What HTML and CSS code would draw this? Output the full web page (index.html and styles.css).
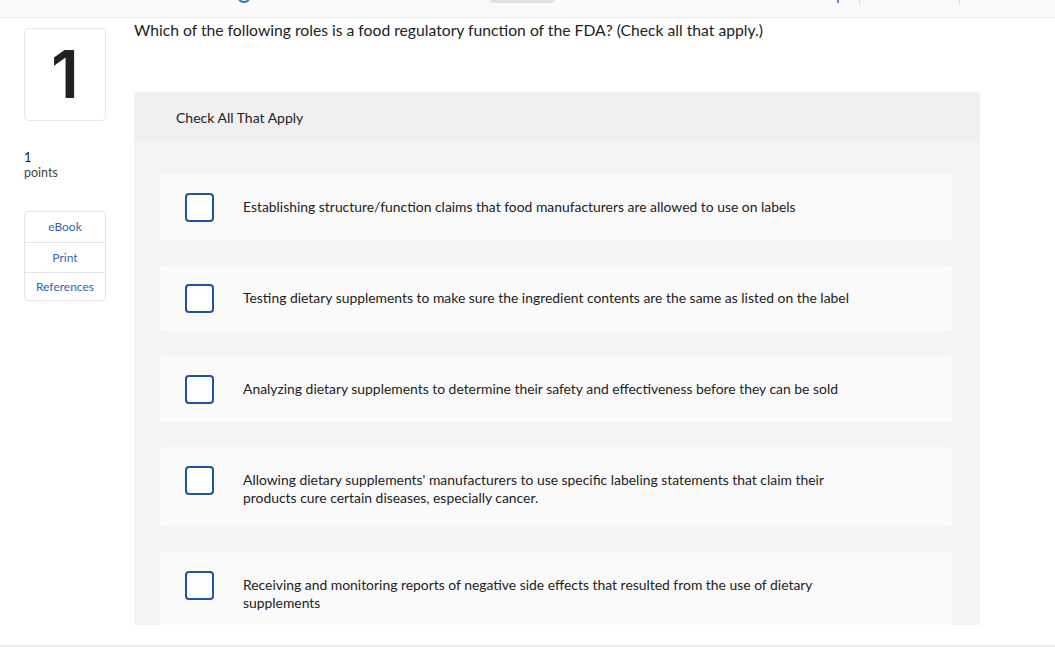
FILE: index.html
```html
<!DOCTYPE html>
<html lang="en">
<head>
<meta charset="utf-8">
<title>Question 1</title>
<link rel="stylesheet" href="styles.css">
</head>
<body>
<div class="topbar">
  <span class="tb-ring"></span>
  <span class="tb-pill"></span>
  <span class="tb-dot"></span>
  <span class="tb-div tb-div1"></span>
  <span class="tb-div tb-div2"></span>
</div>
<div class="main">
  <aside class="side">
    <div class="qnum">1</div>
    <div class="points"><span class="pts-val">1</span><span class="pts-lbl">points</span></div>
    <ul class="tools">
      <li>eBook</li>
      <li>Print</li>
      <li>References</li>
    </ul>
  </aside>
  <section class="question">
    <p class="prompt">Which of the following roles is a food regulatory function of the FDA? (Check all that apply.)</p>
    <div class="panel">
      <div class="panel-head">Check All That Apply</div>
      <div class="panel-body">
        <label class="opt"><span class="box"></span><span class="txt">Establishing structure/function claims that food manufacturers are allowed to use on labels</span></label>
        <label class="opt"><span class="box"></span><span class="txt">Testing dietary supplements to make sure the ingredient contents are the same as listed on the label</span></label>
        <label class="opt"><span class="box"></span><span class="txt">Analyzing dietary supplements to determine their safety and effectiveness before they can be sold</span></label>
        <label class="opt"><span class="box"></span><span class="txt">Allowing dietary supplements' manufacturers to use specific labeling statements that claim their<br>products cure certain diseases, especially cancer.</span></label>
        <label class="opt"><span class="box"></span><span class="txt">Receiving and monitoring reports of negative side effects that resulted from the use of dietary<br>supplements</span></label>
      </div>
    </div>
  </section>
</div>
<div class="footer"></div>
</body>
</html>
```
FILE: styles.css
```css
* { box-sizing: border-box; }
html, body { margin: 0; padding: 0; }
body {
  width: 1055px;
  height: 647px;
  overflow: hidden;
  background: #fff;
  font-family: "Lato", "Open Sans", sans-serif;
  color: #222;
}
.topbar {
  height: 18px;
  background: #fafafa;
  border-bottom: 1px solid #ebebeb;
  display: flex;
  align-items: flex-start;
  overflow: hidden;
}
.tb-ring {
  width: 14px; height: 14px;
  margin-left: 237px;
  margin-top: -11px;
  border-radius: 50%;
  border: 2px solid #2f6fc6;
  flex: none;
}
.tb-pill {
  width: 64px; height: 3px;
  margin-left: 239px;
  background: #e3dfe6;
  border-radius: 0 0 8px 8px;
  flex: none;
}
.tb-dot {
  width: 2px; height: 3px;
  margin-left: 283px;
  background: #5a86c8;
  flex: none;
}
.tb-div {
  width: 1px; height: 4px;
  background: #dcdcdc;
  flex: none;
}
.tb-div1 { margin-left: 20px; }
.tb-div2 { margin-left: 99px; }

.main {
  height: 607px;
  overflow: hidden;
  display: flex;
  align-items: flex-start;
}
.side {
  width: 82px;
  margin-left: 24px;
  padding-top: 10px;
  flex: none;
}
.qnum {
  height: 93px;
  border: 1px solid #e8e8e8;
  border-radius: 5px;
  display: flex;
  align-items: center;
  justify-content: center;
  font-family: "Inter", "Roboto", sans-serif;
  font-weight: 600;
  font-size: 66px;
  line-height: 1;
  color: #222;
  padding-bottom: 2px;
}
.points {
  margin-top: 28px;
  display: flex;
  flex-direction: column;
  font-size: 12.5px;
  line-height: 16px;
}
.pts-val { color: #1a1a3a; font-size: 13px; }
.pts-lbl { color: #444; }
.tools {
  list-style: none;
  margin: 30px 0 0;
  padding: 0;
  border: 1px solid #e3e3e3;
  border-radius: 4px;
}
.tools li {
  font-size: 12px;
  color: #2e66b8;
  text-align: center;
  height: 30px;
  line-height: 30px;
  border-top: 1px solid #e3e3e3;
}
.tools li:first-child { border-top: 0; height: 30px; }
.tools li:last-child { height: 28px; line-height: 27px; }

.question {
  margin-left: 28px;
  width: 846px;
  flex: none;
}
.prompt {
  margin: 0;
  padding-top: 2px;
  font-size: 15.7px;
  line-height: 20px;
  color: #222;
}
.panel {
  margin-top: 52px;
  border-radius: 3px 3px 0 0;
  overflow: hidden;
}
.panel-head {
  height: 50px;
  background: #f0f0f0;
  padding-left: 42px;
  display: flex;
  align-items: center;
  font-size: 14px;
  color: #222;
}
.panel-body {
  background: #f4f4f4;
  padding: 32px 28px 40px 26px;
  display: flex;
  flex-direction: column;
  gap: 25px;
}
.opt {
  display: flex;
  align-items: flex-start;
  background: #fafafa;
  border-radius: 4px;
  padding: 19px 20px 18px 25px;
}
.box {
  width: 29px;
  height: 29px;
  border: 2px solid #1d5798;
  border-radius: 4px;
  background: #fff;
  flex: none;
}
.txt {
  margin: 5px 0 2px 29px;
  font-size: 13.9px;
  line-height: 18px;
  color: #222;
}
.footer {
  height: 22px;
  border-bottom: 2px solid #eeeeee;
}
```
